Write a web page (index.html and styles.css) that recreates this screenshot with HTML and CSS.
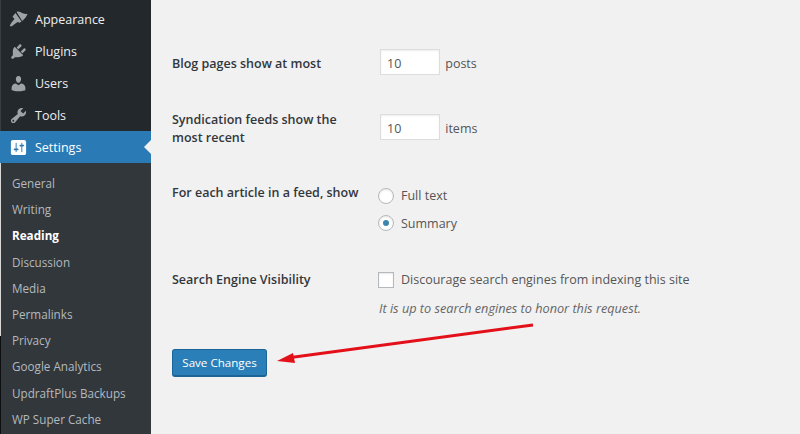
FILE: index.html
```html
<!DOCTYPE html>
<html lang="en">
<head>
    <meta charset="UTF-8">
    <title>Reading Settings</title>
    <link rel="stylesheet" href="styles.css">
</head>
<body>
    <div class="layout">
        <nav class="sidebar">
            <ul class="menu">
                <li class="menu-item">
                    <svg class="menu-icon" viewBox="0 0 20 20"><path d="M8 2C10 .8 12 2 13.5 3 15 4 17 4.6 19.5 4 19 6 17 9 14 11.5z"/><path d="M6.8 3.2L13.2 12.2 11.6 13.2C10.8 13.5 10.2 13 9.6 12.6 8.6 12.4 7.6 13.6 6.4 14.6 4.6 16 2.6 18 1.4 17 .4 16 2.4 13.6 3.6 12 4.8 10.6 5.8 10 5.6 9 5.2 8.4 4 8 3.8 6.8z"/></svg>
                    Appearance
                </li>
                <li class="menu-item">
                    <svg class="menu-icon" viewBox="0 0 20 20"><path d="M13.11 4.36L9.87 7.6 8 5.73l3.24-3.24c.35-.34 1.05-.2 1.56.32.52.51.66 1.21.31 1.55zm-8 1.77l.91-1.12 9.01 9.01-1.19.84c-.71.71-2.63 1.16-3.82 1.16H6.14L4.9 17.26c-.59.59-1.54.59-2.12 0-.59-.58-.59-1.53 0-2.12l1.24-1.24v-3.88c0-1.13.4-3.19 1.09-3.89zm7.26 3.97l3.24-3.24c.34-.35 1.04-.21 1.55.31.52.51.66 1.21.31 1.55l-3.24 3.25z"/></svg>
                    Plugins
                </li>
                <li class="menu-item">
                    <svg class="menu-icon" viewBox="0 0 20 20"><path d="M10 9.25c-2.27 0-2.73-3.44-2.73-3.44C7 4.02 7.82 2 9.97 2c2.16 0 2.98 2.02 2.71 3.81 0 0-.41 3.44-2.68 3.44zm0 2.57L12.72 10c2.39 0 4.52 2.33 4.52 4.53v2.49s-3.65 1.13-7.24 1.13c-3.65 0-7.24-1.13-7.24-1.13v-2.49c0-2.25 1.94-4.48 4.47-4.48z"/></svg>
                    Users
                </li>
                <li class="menu-item">
                    <svg class="menu-icon" viewBox="0 0 20 20"><path d="M16.68 9.77c-1.34 1.34-3.3 1.67-4.95.99l-5.41 6.52c-.99.99-2.59.99-3.58 0s-.99-2.59 0-3.57l6.52-5.42c-.68-1.65-.35-3.61.99-4.95 1.28-1.28 3.12-1.62 4.72-1.06l-2.89 2.89 2.82 2.82 2.86-2.87c.53 1.58.18 3.39-1.08 4.65zM3.81 16.21c.4.39 1.04.39 1.43 0 .4-.4.4-1.04 0-1.43-.39-.4-1.03-.4-1.43 0-.39.39-.39 1.03 0 1.43z"/></svg>
                    Tools
                </li>
                <li class="menu-item current">
                    <svg class="menu-icon" viewBox="0 0 20 20"><path d="M18 16V4c0-1.1-.9-2-2-2H4c-1.1 0-2 .9-2 2v12c0 1.1.9 2 2 2h12c1.1 0 2-.9 2-2zM8 11h1c.55 0 1 .45 1 1s-.45 1-1 1H8v1.5c0 .28-.22.5-.5.5s-.5-.22-.5-.5V13H6c-.55 0-1-.45-1-1s.45-1 1-1h1V5.5c0-.28.22-.5.5-.5s.5.22.5.5V11zm5-2h-1c-.55 0-1-.45-1-1s.45-1 1-1h1V5.5c0-.28.22-.5.5-.5s.5.22.5.5V7h1c.55 0 1 .45 1 1s-.45 1-1 1h-1v5.5c0 .28-.22.5-.5.5s-.5-.22-.5-.5V9z"/></svg>
                    Settings
                </li>
            </ul>
            <ul class="submenu">
                <li>General</li>
                <li>Writing</li>
                <li class="active">Reading</li>
                <li>Discussion</li>
                <li>Media</li>
                <li>Permalinks</li>
                <li>Privacy</li>
                <li>Google Analytics</li>
                <li>UpdraftPlus Backups</li>
                <li>WP Super Cache</li>
            </ul>
        </nav>

        <main class="content">
            <div class="form-row row-posts">
                <div class="row-label">Blog pages show at most</div>
                <div class="row-field">
                    <input class="small-text" type="text" value="10"> posts
                </div>
            </div>
            <div class="form-row row-items">
                <div class="row-label">Syndication feeds show the most recent</div>
                <div class="row-field">
                    <input class="small-text" type="text" value="10"> items
                </div>
            </div>
            <div class="form-row row-show">
                <div class="row-label">For each article in a feed, show</div>
                <div class="row-field radio-list">
                    <label class="check-line"><span class="radio"></span>Full text</label>
                    <label class="check-line"><span class="radio checked"></span>Summary</label>
                </div>
            </div>
            <div class="form-row row-search">
                <div class="row-label">Search Engine Visibility</div>
                <div class="row-field">
                    <label class="check-line"><span class="checkbox"></span>Discourage search engines from indexing this site</label>
                    <p class="description">It is up to search engines to honor this request.</p>
                </div>
            </div>
            <button class="btn-primary">Save Changes</button>

            <!-- annotation drawn on top of the screenshot -->
            <svg class="arrow" width="300" height="60" viewBox="0 0 300 60">
                <line x1="282" y1="5" x2="36" y2="38" stroke="#e3101a" stroke-width="3"/>
                <polygon points="26,41 42,33 44,43" fill="#e3101a"/>
            </svg>
        </main>
    </div>
</body>
</html>
```

FILE: styles.css
```css
* {
    box-sizing: border-box;
}

html, body {
    margin: 0;
    padding: 0;
    height: 100%;
    overflow: hidden;
}

body {
    font-family: 'Open Sans', 'Noto Sans', sans-serif;
    font-size: 12.5px;
    background: #f1f1f1;
    color: #555;
}

.layout {
    display: flex;
    height: 434px;
}

.sidebar {
    position: relative;
    width: 151px;
    flex-shrink: 0;
    background: #23282d;
    padding-top: 3px;
}

/* thin edge left over at the side of the screenshot */
.sidebar::before {
    content: "";
    position: absolute;
    left: 0;
    top: 0;
    bottom: 0;
    width: 1px;
    background: linear-gradient(#3a3e42 163px, #d8d8d8 163px, #d8d8d8 336px, #0c0e10 336px);
}

.menu, .submenu {
    list-style: none;
    margin: 0;
    padding: 0;
}

.menu-item {
    position: relative;
    display: flex;
    align-items: center;
    gap: 7px;
    height: 32px;
    padding-left: 9px;
    color: #eee;
    font-size: 12.5px;
}

.menu-icon {
    width: 19px;
    height: 19px;
    fill: #9ea3a8;
}

.menu-item.current {
    background: #2a7ab5;
    color: #fff;
}

.menu-item.current .menu-icon {
    fill: #fff;
}

.menu-item.current::after {
    content: "";
    position: absolute;
    right: 0;
    top: 9px;
    border: 7px solid transparent;
    border-right-color: #f1f1f1;
    border-left-width: 0;
}

.submenu {
    background: #32373c;
    padding-top: 7px;
    height: 271px;
}

.submenu li {
    height: 26.2px;
    line-height: 26px;
    padding-left: 12px;
    font-size: 11.7px;
    color: #b4b9be;
}

.submenu li.active {
    color: #fff;
    font-weight: 700;
}

.content {
    position: relative;
    flex: 1;
    padding: 49px 0 0 21px;
}

.form-row {
    display: flex;
}

.row-label {
    width: 208px;
    flex-shrink: 0;
    padding-right: 20px;
    font-weight: 600;
    line-height: 18px;
    color: #32373c;
}

.row-posts {
    height: 65px;
}

.row-posts .row-label {
    padding-top: 6px;
}

.row-items {
    height: 68px;
}

.row-items .row-label {
    margin-top: -3px;
}

.row-show {
    height: 84px;
}

.row-show .row-label {
    margin-top: 2px;
}

.row-search {
    height: 83px;
}

.row-search .row-label {
    padding-top: 5px;
}

.small-text {
    width: 60px;
    height: 26px;
    margin-right: 2px;
    padding: 2px 6px 0;
    border: 1px solid #ddd;
    background: #fff;
    font: inherit;
    color: #555;
    box-shadow: inset 0 1px 2px rgba(0,0,0,0.07);
}

.check-line {
    display: flex;
    align-items: center;
    gap: 7px;
    height: 27.5px;
    margin-left: -2px;
}

.radio, .checkbox {
    display: block;
    width: 16px;
    height: 16px;
    background: #fff;
    border: 1px solid #b4b9be;
    box-shadow: inset 0 1px 2px rgba(0,0,0,0.1);
}

.radio {
    border-radius: 50%;
}

.radio.checked {
    position: relative;
}

.radio.checked::after {
    content: "";
    position: absolute;
    left: 4px;
    top: 4px;
    width: 6px;
    height: 6px;
    border-radius: 50%;
    background: #3d85ad;
}

.description {
    margin: 5px 0 0 -1px;
    font-size: 12.7px;
    line-height: 18px;
    font-style: italic;
    color: #666;
}

.btn-primary {
    display: block;
    width: 95px;
    height: 28px;
    padding: 0 0 1px;
    background: #2a7fb8;
    border: 1px solid #1a6496;
    border-bottom-width: 2px;
    border-radius: 3px;
    font: inherit;
    font-size: 11.6px;
    color: #fff;
}

.arrow {
    position: absolute;
    left: 100px;
    top: 320px;
}
```
